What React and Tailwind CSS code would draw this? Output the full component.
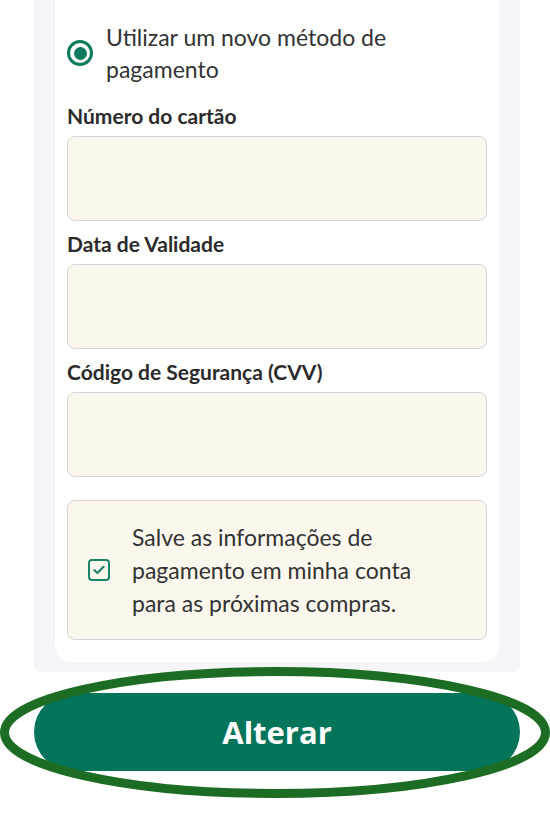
import React, { useState } from "react";

const Field = ({ label }) => (
  <div className="flex flex-col">
    <label className="h-[28px] leading-[28px] text-[21px] font-bold text-[#2b2b2b] mb-[6px]">{label}</label>
    <input
      type="text"
      className="h-[85px] w-full rounded-lg border-[1.5px] border-[#d6d6da] bg-[#fbf7ed] px-3 outline-none"
    />
  </div>
);

const App = () => {
  const [salvar, setSalvar] = useState(true);

  return (
    <div className="relative w-[550px] h-[834px] overflow-hidden bg-white text-[#333] font-['Lato',sans-serif]">
      <div className="ml-[34px] w-[486px] rounded-b-lg bg-[#f5f4f9] px-[21px] pb-[10px]">
        <div className="rounded-b-2xl bg-white px-3 pt-[21px] pb-[22px]">
          {/* novo metodo */}
          <div className="flex items-center gap-[13px] mb-[17px]">
            <span className="flex h-[26px] w-[26px] shrink-0 items-center justify-center rounded-full border-[3px] border-[#0b7a5e]">
              <span className="h-[13px] w-[13px] rounded-full bg-[#0b7a5e]" />
            </span>
            <p className="text-[23px] leading-[32px] text-[#333]">
              Utilizar um novo método de
              <br />
              pagamento
            </p>
          </div>

          <div className="flex flex-col gap-[9px]">
            <Field label="Número do cartão" />
            <Field label="Data de Validade" />
            <Field label="Código de Segurança (CVV)" />
          </div>

          <div className="mt-[23px] flex h-[140px] items-center gap-[22px] rounded-lg border-[1.5px] border-[#d6d6da] bg-[#fbf7ed] pl-[20px] pr-4">
            <button
              type="button"
              onClick={() => setSalvar(!salvar)}
              className="flex h-[22px] w-[22px] shrink-0 items-center justify-center rounded-[4px] border-[2.5px] border-[#1a8468]"
            >
              {salvar && (
                <svg width="12" height="10" viewBox="0 0 12 10" fill="none">
                  <path d="M1.5 5.2 L4.5 8 L10.5 1.8" stroke="#1a8468" strokeWidth="2.2" strokeLinecap="round" strokeLinejoin="round" />
                </svg>
              )}
            </button>
            <p className="text-[23px] leading-[33px] text-[#333]">
              Salve as informações de
              <br />
              pagamento em minha conta
              <br />
              para as próximas compras.
            </p>
          </div>
        </div>
      </div>

      <button
        type="button"
        className="ml-[34px] mt-[21px] flex h-[78px] w-[486px] items-center justify-center rounded-full bg-[#04745a] text-[31px] font-bold text-white font-['Open_Sans',sans-serif]"
      >
        Alterar
      </button>

      {/* destaque */}
      <svg className="pointer-events-none absolute left-0 top-0" width="550" height="834">
        <ellipse cx="275" cy="732.5" rx="270.5" ry="61" fill="none" stroke="#1c6c23" strokeWidth="9" />
      </svg>
    </div>
  );
};

export default App;
